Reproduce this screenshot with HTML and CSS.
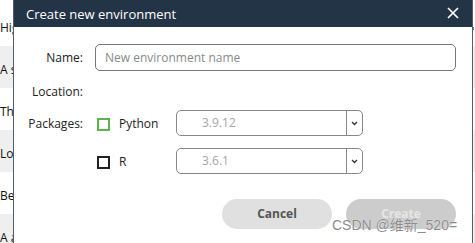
FILE: index.html
```html
<!DOCTYPE html>
<html>
<head>
<meta charset="utf-8">
<link rel="stylesheet" href="styles.css">
</head>
<body>
<div class="page">
  <ul class="list">
    <li class="item">High</li>
    <li class="item alt">A small</li>
    <li class="item">The</li>
    <li class="item alt">Low</li>
    <li class="item">Below</li>
    <li class="item alt">A all</li>
  </ul>
  <div class="focus-mark"></div>

  <div class="dialog">
    <div class="titlebar">
      <span class="title">Create new environment</span>
      <svg class="close" width="12" height="12" viewBox="0 0 12 12"><path d="M1 1L11 11M11 1L1 11" stroke="#fff" stroke-width="1.7" fill="none"/></svg>
    </div>
    <div class="body">
      <div class="row row-name">
        <label class="label">Name:</label>
        <div class="input">New environment name</div>
      </div>
      <div class="row row-location">
        <label class="label">Location:</label>
      </div>
      <div class="row row-pkg">
        <label class="label">Packages:</label>
        <div class="check"><span class="box box-on"></span><span class="check-text">Python</span></div>
        <div class="select"><span class="value">3.9.12</span><span class="arrow"><svg width="7" height="5" viewBox="0 0 7 5"><path d="M1 1L3.5 3.5L6 1" stroke="#333" stroke-width="1.3" fill="none"/></svg></span></div>
      </div>
      <div class="row row-pkg2">
        <span class="label"></span>
        <div class="check"><span class="box"></span><span class="check-text">R</span></div>
        <div class="select"><span class="value">3.6.1</span><span class="arrow"><svg width="7" height="5" viewBox="0 0 7 5"><path d="M1 1L3.5 3.5L6 1" stroke="#333" stroke-width="1.3" fill="none"/></svg></span></div>
      </div>
      <div class="buttons">
        <button class="btn btn-cancel">Cancel</button>
        <button class="btn btn-create">Create</button>
      </div>
    </div>
  </div>
  <div class="watermark">CSDN @维新_520=</div>
</div>
</body>
</html>
```
FILE: styles.css
```css
html, body {
  margin: 0;
  padding: 0;
}
body {
  width: 475px;
  height: 243px;
  overflow: hidden;
  background: #fff;
  font-family: "Open Sans", "Noto Sans", sans-serif;
}
.page {
  position: relative;
  width: 475px;
  height: 243px;
  overflow: hidden;
}
.list {
  list-style: none;
  margin: 0;
  padding: 4px 0 0 0;
}
.item {
  height: 42px;
  box-sizing: border-box;
  padding-top: 15px;
  padding-left: 0;
  font-size: 12px;
  line-height: 18px;
  color: #111;
  white-space: nowrap;
  background: #fff;
}
.item.alt {
  background: #efefef;
}
.focus-mark {
  position: absolute;
  left: 473px;
  top: 27px;
  width: 1px;
  height: 3px;
  background: #3d8fe0;
}
.dialog {
  position: absolute;
  left: 13px;
  top: 0;
  width: 460px;
  height: 260px;
  box-sizing: border-box;
  border-left: 1px solid #4d5f71;
  border-right: 1px solid #4d5f71;
  background: #fff;
}
.titlebar {
  height: 27px;
  background: #243447;
  display: flex;
  align-items: center;
  justify-content: space-between;
  padding: 0 13px 0 12px;
}
.title {
  color: #fff;
  font-size: 13px;
  letter-spacing: 0;
}
.close {
  display: block;
  margin-top: -2px;
}
.body {
  display: flex;
  flex-direction: column;
  padding: 17px 16px 0 0;
}
.row {
  display: flex;
  align-items: center;
}
.label {
  width: 69px;
  flex: none;
  text-align: right;
  font-size: 12px;
  color: #222;
  margin-right: 12px;
}
.row-name {
  height: 27px;
}
.input {
  flex: 1;
  height: 27px;
  box-sizing: border-box;
  border: 1px solid #777;
  border-radius: 5px;
  padding-left: 9px;
  font-size: 12px;
  line-height: 25px;
  color: #8a8a8a;
}
.row-location {
  height: 20px;
  margin-top: 10px;
}
.row-pkg {
  height: 26px;
  margin-top: 9px;
}
.row-pkg2 {
  height: 26px;
  margin-top: 12px;
}
.check {
  width: 81px;
  flex: none;
  display: flex;
  align-items: center;
}
.box {
  width: 13px;
  height: 13px;
  box-sizing: border-box;
  border: 2px solid #222;
  margin-left: 2px;
  margin-right: 9px;
  margin-top: 2px;
}
.box-on {
  border-color: #5bb54c;
}
.check-text {
  font-size: 12px;
  color: #222;
}
.select {
  width: 187px;
  height: 26px;
  box-sizing: border-box;
  border: 1px solid #888;
  border-radius: 5px;
  display: flex;
}
.value {
  flex: 1;
  padding-left: 25px;
  font-size: 12px;
  line-height: 24px;
  color: #a5a5a5;
}
.arrow {
  width: 15px;
  border-left: 1px solid #888;
  display: flex;
  align-items: center;
  justify-content: center;
}
.arrow svg {
  display: block;
}
.buttons {
  display: flex;
  justify-content: flex-end;
  gap: 14px;
  margin-top: 25px;
}
.btn {
  width: 110px;
  height: 30px;
  border: none;
  border-radius: 15px;
  font-family: "Open Sans", "Noto Sans", sans-serif;
  font-size: 12px;
  font-weight: bold;
  padding: 0 0 2px 0;
}
.btn-cancel {
  background: #e0e0e0;
  color: #555;
}
.btn-create {
  background: #cccccc;
  color: #e6e6e6;
}
.watermark {
  position: absolute;
  left: 332px;
  top: 216px;
  font-family: "Liberation Sans", "Noto Sans CJK SC", sans-serif;
  font-size: 14px;
  line-height: 18px;
  color: #8c8c8c;
  white-space: nowrap;
  text-shadow: 0 0 1px #fff;
}
```
